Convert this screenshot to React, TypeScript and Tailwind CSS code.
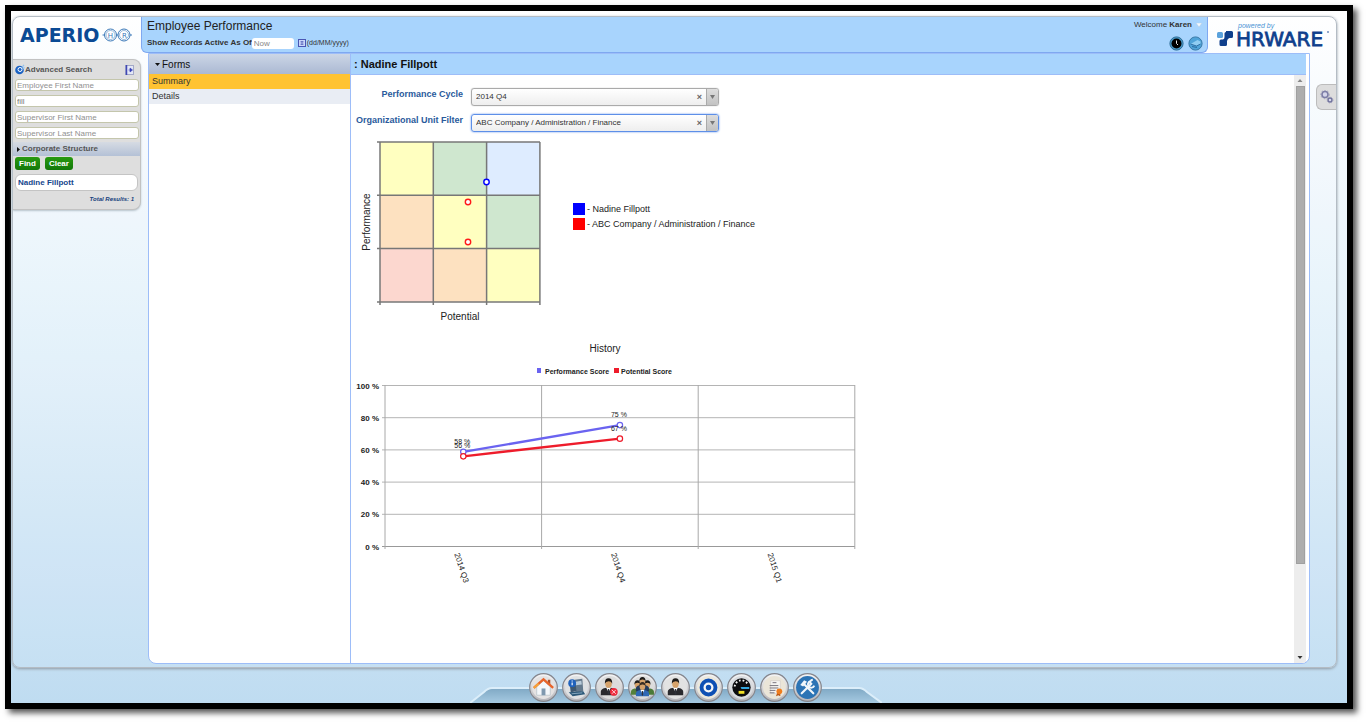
import { useState } from "react";
import type { ReactNode } from "react";

const searchFields = [
    { id: "empFirst", label: "Employee First Name", value: "" },
    { id: "empLast", label: "Employee Last Name", value: "fill" },
    { id: "supFirst", label: "Supervisor First Name", value: "" },
    { id: "supLast", label: "Supervisor Last Name", value: "" },
];

// Nine box cells, top row first
const boxColors = [
    ["#ffffc0", "#cfe7cf", "#deecff"],
    ["#fde1c0", "#ffffc0", "#cfe7cf"],
    ["#fcd7cf", "#fde1c0", "#ffffc0"],
];

const boxPoints = [
    { x: 129.5, y: 44, color: "#0000ff" },
    { x: 111, y: 64, color: "#ff1a1a" },
    { x: 111, y: 104, color: "#ff1a1a" },
];

const cycles = ["2014 Q3", "2014 Q4", "2015 Q1"];

const series = [
    { name: "Performance Score", color: "#6a63f0", values: [58.8, 75.4], labels: ["58 %", "75 %"] },
    { name: "Potential Score", color: "#ee1c2b", values: [56, 67], labels: ["56 %", "67 %"] },
];

function AperioLogo() {
    return (
        <svg width="116" height="20" viewBox="0 0 116 20" role="img" aria-label="Aperio HR">
            <text x="0" y="17" fontSize="19" fontWeight="700" fill="#0b4a94" fontFamily="DejaVu Sans, sans-serif">
                APERIO
            </text>
            <g fill="#ffffff" stroke="#3a78b8" strokeWidth="1">
                <path d="M96 10h3" />
                <circle cx="90.500" cy="10" r="6" />
                <circle cx="104" cy="10" r="6" />
                <circle cx="90.500" cy="10" r="4.500" strokeWidth=".5" />
                <circle cx="104" cy="10" r="4.500" strokeWidth=".5" />
                <path d="M82.500 10h2M110 10h2" />
            </g>
            <g fontSize="7" fill="#3a78b8" textAnchor="middle" fontFamily="DejaVu Sans, sans-serif">
                <text x="90.500" y="12.500">H</text>
                <text x="104.500" y="12.500">R</text>
            </g>
        </svg>
    );
}

function HrwareLogo() {
    return (
        <svg width="114" height="32" viewBox="0 0 114 32" role="img" aria-label="Powered by HRware">
            <text x="22" y="7" fontSize="7" fontStyle="italic" fill="#4a94d4" fontFamily="Liberation Sans, Arial, sans-serif">
                powered by
            </text>
            <rect x="1" y="11" width="6" height="6" rx="1.500" fill="#5aa2dc" />
            <path
                d="M10 10h5.500q1.500 0 1.500 1.500v4q0 1.500-1.500 1.500h-2q-2 .5-2.500 3v3.500q0 1.500-1.500 1.500H5q-1.500 0-1.500-1.500v-3.500q0-1.500 1.500-1.500h2q1.500-.5 1.500-2.500v-3.500q0-1.500 1.500-1.500z"
                fill="#0f3f8c"
            />
            <text
                x="20"
                y="25"
                fontSize="20"
                fill="#0f3f8c"
                stroke="#0f3f8c"
                strokeWidth="0.8"
                fontFamily="DejaVu Sans, sans-serif"
            >
                HRWARE
            </text>
            <circle cx="112" cy="11" r=".8" fill="#0f3f8c" />
        </svg>
    );
}

function Person({ x = 15, y = 7, suit = "#2a2a2e", hair = "#1d1a18" }) {
    return (
        <g transform={`translate(${x} ${y})`}>
            <path d="M-8 16v-3.500q0-3 4.500-4L0 8l3.500.5q4.500 1 4.500 4V16z" fill={suit} />
            <path d="M-2.500 8L0 13l2.500-5z" fill="#ffffff" />
            <path d="M-.6 9.500h1.200L.9 14 0 15.500-.9 14z" fill="#30323a" />
            <ellipse cx="0" cy="4" rx="3.400" ry="4.300" fill="#d6a26a" />
            <path d="M-3.800 4Q-4-1.500 0-1.500T3.800 4Q3 1.400 0 1.500T-3.800 4z" fill={hair} />
        </g>
    );
}

const dockItems: { label: string; face: string; art: ReactNode }[] = [
    {
        label: "Home",
        face: "#e4e2e2",
        art: (
            <>
                <path d="M8 14l7-6 7 6v9H8z" fill="#f4f7fa" stroke="#a9b4bf" strokeWidth=".6" />
                <rect x="19.500" y="7" width="2.500" height="5" fill="#a8512c" />
                <path d="M5 15.500L15 6.500l10 9" fill="none" stroke="#e8642a" strokeWidth="2.400" />
                <path d="M5 15.500l5-4.500" stroke="#f6a33a" strokeWidth="2.200" />
                <rect x="13" y="16" width="4" height="7" fill="#7f98ae" />
            </>
        ),
    },
    {
        label: "System information",
        face: "#dfe1e3",
        art: (
            <>
                <path d="M13 7l8-1 1 13-8 2z" fill="#64798c" />
                <path d="M14 9l6-1 .5 4-6 .8z" fill="#b9cbd9" />
                <path d="M8 12l6-1 1 8-6 1z" fill="#3e5870" />
                <path d="M7 20l15-1 2 3-13 2z" fill="#2c5878" />
                <path d="M10 21.500l11-1" stroke="#9dbbd0" strokeWidth=".8" />
                <circle cx="10.500" cy="10.500" r="4" fill="#1f62bd" />
                <path d="M10.500 9.800v3M10.500 7.800v1" stroke="#fff" strokeWidth="1.200" />
            </>
        ),
    },
    {
        label: "Terminations",
        face: "#dcdcdc",
        art: (
            <>
                <Person x={14} />
                <circle cx="19.500" cy="19.500" r="4" fill="#ef2b3d" />
                <path d="M17.500 17.500l4 4M17.500 21.500l4-4" stroke="#ffd0d4" strokeWidth="1" />
            </>
        ),
    },
    {
        label: "Teams",
        face: "#dcdcdc",
        art: (
            <g transform="translate(2.200 2) scale(.85)">
                <Person x={9} y={8} suit="#55813b" />
                <Person x={21} y={8} suit="#4a7a37" />
                <Person x={15} y={4} suit="#243a5c" />
                <Person x={15} y={10} suit="#2f68b5" hair="#3a2d22" />
            </g>
        ),
    },
    { label: "Employee", face: "#e2e2e2", art: <Person /> },
    {
        label: "Goals",
        face: "#ece8dc",
        art: (
            <>
                <circle cx="15" cy="15" r="7.200" fill="#f7f7f7" stroke="#0f50b4" strokeWidth="4" />
                <circle cx="15" cy="15" r="2.800" fill="#0f50b4" />
            </>
        ),
    },
    {
        label: "Dashboard",
        face: "#d9dce0",
        art: (
            <>
                <circle cx="15" cy="15" r="9.500" fill="#0c0c0e" />
                <path d="M8 14a7 7 0 0 1 13.500-2" fill="none" stroke="#f2f2f2" strokeWidth="2" strokeDasharray="1.800 2" />
                <path d="M14 14.500h9v2h-8z" fill="#35a5dc" />
                <rect x="12" y="18.500" width="6" height="3" fill="#f2e025" />
            </>
        ),
    },
    {
        label: "Certificates",
        face: "#eae5d8",
        art: (
            <>
                <path d="M11 8h10v13H11z" fill="#f6f4f2" stroke="#c6c0c0" strokeWidth=".5" />
                <path d="M13 10h4M10 13h9M10 15.500h9M10 18h6M10 20.500h5" stroke="#77727c" strokeWidth="1" />
                <path d="M18 20l-1.500 4 2.500-1 2 1v-4z" fill="#bb5716" />
                <circle cx="20" cy="19" r="3" fill="#ef7d1d" />
            </>
        ),
    },
    {
        label: "Tools",
        face: "#2c74b5",
        art: (
            <>
                <path d="M9 21l10-10M21 21L11 11" stroke="#f2f7fb" strokeWidth="2.200" strokeLinecap="round" />
                <path d="M7.500 12.500l4-5 3 1.500-4 5z" fill="#f2f7fb" />
                <path d="M18 8.500a3.400 3.400 0 1 0 4 4.500" fill="none" stroke="#f2f7fb" strokeWidth="2" />
                <path d="M18 11.500q-1-4 2.500-4.500" fill="none" stroke="#f2f7fb" strokeWidth="2" />
            </>
        ),
    },
];

function Dock() {
    return (
        <nav aria-label="Modules" className="relative mr-1.5 flex h-full w-[412px] justify-center gap-1 pt-[5px] pr-[2px]">
            <svg className="absolute bottom-0 left-0" width="412" height="16" viewBox="0 0 412 16" aria-hidden="true">
                <defs>
                    <linearGradient id="shelf" x1="0" y1="0" x2="0" y2="1">
                        <stop offset="0" stopColor="#7fa8c4" />
                        <stop offset="1" stopColor="#a6cae2" />
                    </linearGradient>
                </defs>
                <path d="M0 16L14 5q4-4 8-4h367q4 0 8 4l15 11z" fill="url(#shelf)" />
                <path d="M0 16L14 5q4-4 8-4h367q4 0 8 4l15 11" fill="none" stroke="#dceefa" strokeWidth="2" />
            </svg>
            {dockItems.map((item, i) => (
                <button key={item.label} type="button" aria-label={item.label} className="relative size-[29px] shrink-0">
                    <svg width="29" height="29" viewBox="0 0 30 30" aria-hidden="true">
                        <defs>
                            <linearGradient id={`rim${i}`} x1="0" y1="0" x2="0" y2="1">
                                <stop offset="0" stopColor="#f6f6f7" />
                                <stop offset="1" stopColor="#b4b4b9" />
                            </linearGradient>
                        </defs>
                        <circle cx="15" cy="15" r="14.300" fill={`url(#rim${i})`} stroke="#85868d" strokeWidth="1.200" />
                        <circle cx="15" cy="15" r="11.800" fill={item.face} />
                        {item.art}
                    </svg>
                </button>
            ))}
        </nav>
    );
}

function NineBox() {
    const stops = [0, 1, 2, 3];
    return (
        <svg
            width="190"
            height="190"
            viewBox="0 0 190 190"
            className="shrink-0"
            fontFamily="Liberation Sans, Arial, sans-serif"
            fontSize="10"
            fill="#222222"
            textAnchor="middle"
        >
            {boxColors.map((row, r) =>
                row.map((color, c) => (
                    <rect key={`${r}-${c}`} x={23 + c * 53.3} y={4 + r * 53.3} width="53.300" height="53.300" fill={color} />
                ))
            )}
            <g stroke="#777777" strokeWidth="1.500">
                {stops.map((n) => (
                    <g key={n}>
                        <line x1={23 + n * 53.3} y1="4" x2={23 + n * 53.3} y2="167" />
                        <line x1="20" y1={4 + n * 53.3} x2="183" y2={4 + n * 53.3} />
                    </g>
                ))}
            </g>
            {boxPoints.map((p) => (
                <circle key={`${p.x}-${p.y}`} cx={p.x} cy={p.y} r="2.700" fill="#ffffff" stroke={p.color} strokeWidth="1.400" />
            ))}
            <text transform="translate(13 84) rotate(-90)">Performance</text>
            <text x="103" y="182">
                Potential
            </text>
        </svg>
    );
}

function HistoryChart() {
    const px = (i: number) => 34 + 156.6 * (i + 0.5);
    const py = (v: number) => 208.5 - 1.61 * v;

    return (
        <svg
            width="510"
            height="250"
            viewBox="0 0 510 250"
            className="mt-2.5"
            fontFamily="Liberation Sans, Arial, sans-serif"
            fill="#222222"
        >
            <text x="254" y="14" fontSize="10" textAnchor="middle">
                History
            </text>
            <g fontSize="7" fontWeight="700">
                <rect x="186" y="30" width="4" height="5" fill="#6a63f0" />
                <text x="194" y="36">
                    Performance Score
                </text>
                <rect x="263" y="30" width="5" height="5" fill="#ee1c2b" />
                <text x="270" y="36">
                    Potential Score
                </text>
            </g>

            {[0, 20, 40, 60, 80, 100].map((v) => (
                <g key={v}>
                    <line x1="31" y1={py(v)} x2="504" y2={py(v)} stroke={v === 0 ? "#999999" : "#b4b4b4"} />
                    <text x="28" y={py(v) + 3} fontSize="8" fontWeight="700" textAnchor="end">
                        {v} %
                    </text>
                </g>
            ))}
            {[0, 1, 2, 3].map((n) => (
                <line key={n} x1={34 + n * 156.6} y1="47" x2={34 + n * 156.6} y2="211" stroke="#a8a8a8" />
            ))}

            {series.map((s) => (
                <g key={s.name}>
                    <polyline
                        points={s.values.map((v, i) => `${px(i)},${py(v)}`).join(" ")}
                        fill="none"
                        stroke={s.color}
                        strokeWidth="2.400"
                    />
                    {s.values.map((v, i) => (
                        <text key={i} x={px(i) - 1} y={py(v) - 8} fontSize="7" textAnchor="middle">
                            {s.labels[i]}
                        </text>
                    ))}
                    {s.values.map((v, i) => (
                        <circle key={i} cx={px(i)} cy={py(v)} r="2.700" fill="#ffffff" stroke={s.color} strokeWidth="1.200" />
                    ))}
                </g>
            ))}

            {cycles.map((c, i) => (
                <text key={c} transform={`translate(${px(i) - 9} 216) rotate(72)`} fontSize="8">
                    {c}
                </text>
            ))}
        </svg>
    );
}

function FilterSelect({ id, label, options, active }: { id: string; label: string; options: string[]; active?: boolean }) {
    return (
        <>
            <label htmlFor={id} className="text-right text-[9px] leading-3 font-bold text-[#2a5a9c]">
                {label}
            </label>
            <div
                className={`relative flex h-[18px] overflow-hidden rounded-[3px] border bg-linear-to-b from-white to-[#eeeeee] ${
                    active ? "border-[#5d8fe8] shadow-[0_0_2px_#5d8fe8]" : "border-[#aaaaaa] shadow-[0_0_1px_#999999]"
                }`}
            >
                <select id={id} className="w-full appearance-none bg-transparent pl-1 text-[8px] leading-4 text-[#333333] outline-none">
                    {options.map((o) => (
                        <option key={o}>{o}</option>
                    ))}
                </select>
                <button
                    type="button"
                    aria-label={`Clear ${label}`}
                    className="absolute top-0 right-4 text-[9px] leading-[17px] font-bold text-[#666666]"
                >
                    ×
                </button>
                <span className="pointer-events-none flex w-3 shrink-0 items-center justify-center border-l border-[#aaaaaa] bg-linear-to-b from-[#dddddd] to-[#c2c2c2]">
                    <svg width="5" height="4" viewBox="0 0 5 4" aria-hidden="true">
                        <path d="M0 0h5L2.500 4z" fill="#777777" />
                    </svg>
                </span>
            </div>
        </>
    );
}

function Sidebar() {
    const [values, setValues] = useState(searchFields.map((f) => f.value));

    return (
        <aside className="w-32 shrink-0 pt-1.5">
            <form
                onSubmit={(e) => e.preventDefault()}
                className="rounded-lg rounded-l-none border border-l-0 border-[#c2c2c2] bg-[#dedede] pb-1.5 shadow-[0_1px_2px_#b8c4cc]"
            >
                <div className="flex h-[19px] items-center pr-1.5 pl-0.5">
                    <svg width="10" height="11" viewBox="0 0 10 11" aria-hidden="true">
                        <circle cx="4.500" cy="6" r="4.300" fill="#1b62c4" />
                        <circle cx="5" cy="5.500" r="2" fill="none" stroke="#ffffff" />
                        <path d="M6.500 4L9 .8M7.500 5l2-1.500" stroke="#8fc0ee" strokeWidth="1.200" />
                    </svg>
                    <h2 className="flex-1 text-[8px] font-bold text-[#555555]">Advanced Search</h2>
                    <button type="button" aria-label="Collapse search">
                        <svg width="9" height="10" viewBox="0 0 9 10" aria-hidden="true">
                            <rect x=".5" y=".5" width="8" height="9" fill="#e4e8f6" stroke="#a3a9c8" />
                            <path d="M1.500 0v10" stroke="#4148b4" strokeWidth="1.500" />
                            <path d="M3.500 5h2M5 3l2.500 2L5 7z" fill="#3540b8" stroke="#3540b8" strokeWidth=".6" />
                        </svg>
                    </button>
                </div>
                <div className="flex flex-col gap-1 pr-px pl-0.5">
                    {searchFields.map((f, i) => (
                        <input
                            key={f.id}
                            id={f.id}
                            aria-label={f.label}
                            placeholder={f.label}
                            value={values[i]}
                            onChange={(e) => setValues(values.map((v, n) => (n === i ? e.target.value : v)))}
                            className="h-3 w-full rounded-[3px] border border-[#c4c6ac] bg-white px-px text-[8px] leading-[10px] text-[#777777] outline-none placeholder:text-[#909090]"
                        />
                    ))}
                </div>
                <button
                    type="button"
                    className="mt-[3px] flex h-3.5 w-full items-center gap-0.5 bg-linear-to-b from-[#d6dbe3] to-[#b4c1d6] pl-1 text-[8px] font-bold text-[#555555]"
                >
                    <svg width="3" height="5" viewBox="0 0 3 5" aria-hidden="true">
                        <path d="M0 0l3 2.500L0 5z" fill="#111111" />
                    </svg>
                    Corporate Structure
                </button>
                <div className="mt-px flex gap-[5px] pl-0.5">
                    <button
                        type="submit"
                        className="h-[13px] rounded-[3px] bg-linear-to-b from-[#289a10] to-[#12780a] px-1 text-[8px] leading-[13px] font-bold text-white"
                    >
                        Find
                    </button>
                    <button
                        type="reset"
                        className="h-[13px] rounded-[3px] bg-linear-to-b from-[#289a10] to-[#12780a] px-1 text-[8px] leading-[13px] font-bold text-white"
                    >
                        Clear
                    </button>
                </div>
                <a
                    href="#nadine"
                    className="mt-1 mr-0.5 ml-0.5 block h-[17px] rounded-md border border-[#c4c4c4] bg-white px-0.5 text-[8px] leading-[15px] font-bold text-[#15468c]"
                >
                    Nadine Fillpott
                </a>
                <p className="mt-1 pr-1.5 text-right text-[6px] leading-2 font-bold text-[#15407c] italic">Total Results: 1</p>
            </form>
        </aside>
    );
}

function Header() {
    return (
        <header className="flex h-9 shrink-0">
            <div className="flex w-32 shrink-0 items-center rounded-tl-md pl-[7px]">
                <AperioLogo />
            </div>
            <div className="flex min-w-0 flex-1 justify-between rounded-b-md border border-t-0 border-[#7fa8f0] bg-[#a8d4fd] pr-1 pl-[5px]">
                <div>
                    <h1 className="text-[12px] leading-[18px] text-[#222222]">Employee Performance</h1>
                    <div className="flex h-4 items-center">
                        <label htmlFor="activeAsOf" className="text-[8px] font-bold text-[#333333]">
                            Show Records Active As Of
                        </label>
                        <input
                            id="activeAsOf"
                            defaultValue="Now"
                            className="h-[11px] w-[42px] rounded-[3px] bg-white pl-0.5 text-[8px] leading-[11px] text-[#888888] outline-none"
                        />
                        <button type="button" aria-label="Pick date" className="ml-1">
                            <svg width="8" height="8" viewBox="0 0 8 8" aria-hidden="true">
                                <rect x=".5" y=".5" width="7" height="7" fill="#c9d6fa" stroke="#4a56b4" />
                                <path d="M2.500 2.500h3M2.500 4h3M2.500 5.500h3M4 2v4" stroke="#4a56b4" strokeWidth=".6" />
                            </svg>
                        </button>
                        <span className="pl-px text-[7px] text-[#333333]">(dd/MM/yyyy)</span>
                    </div>
                </div>
                <div className="flex flex-col items-end">
                    <button type="button" className="flex h-4 items-center pr-px text-[8px] text-[#333333]">
                        Welcome&nbsp;<b>Karen</b>
                        <svg width="6" height="4" viewBox="0 0 6 4" className="ml-1" aria-hidden="true">
                            <path d="M0 0h6L3 4z" fill="#f4faff" stroke="#b6cbe0" strokeWidth=".5" />
                        </svg>
                    </button>
                    <div className="flex gap-1 pt-[3px]">
                        <button type="button" aria-label="Time clock">
                            <svg width="15" height="15" viewBox="0 0 15 15" aria-hidden="true">
                                <circle cx="7.500" cy="7.500" r="6.600" fill="#4c9ccb" stroke="#2e6d96" />
                                <circle cx="7.500" cy="7.500" r="5" fill="#000000" />
                                <path d="M7.500 4.500v3l1.500 1.500" fill="none" stroke="#e8e8e8" />
                            </svg>
                        </button>
                        <button type="button" aria-label="Training">
                            <svg width="15" height="15" viewBox="0 0 15 15" aria-hidden="true">
                                <circle cx="7.500" cy="7.500" r="6.600" fill="#4fa3d8" stroke="#3a7ba8" />
                                <path d="M2.500 8l7-4 3 1.500v2.500l-4 2z" fill="#8fcdf2" />
                                <path d="M2.500 8l6 2 4-2M4 10.500l5 1" fill="none" stroke="#1f5f94" strokeWidth=".8" />
                            </svg>
                        </button>
                    </div>
                </div>
            </div>
            <div className="flex w-32 shrink-0 items-end pl-2">
                <HrwareLogo />
            </div>
        </header>
    );
}

export default function App() {
    return (
        <div className="flex h-screen min-h-[600px] bg-white pt-[5px] pr-[13px] pb-3.5 pl-[5px] font-['Liberation_Sans',Arial,sans-serif]">
            <div className="flex min-w-0 flex-1 flex-col border-[6px] border-black bg-linear-to-b from-white via-[#e2f0fa] to-[#bfdcf1] shadow-[4px_4px_6px_#555555]">
                <div className="mt-[5px] mr-2.5 ml-px flex min-h-0 flex-1 flex-col rounded-lg border border-[#b4bcc4] bg-white/5 shadow-[0_1px_3px_#8f9aa3]">
                    <Header />
                    <div className="flex min-h-0 flex-1 pb-[3px]">
                        <Sidebar />
                        <main className="ml-[7px] flex min-w-0 flex-1 overflow-hidden rounded-b-lg border border-[#9dbdf8] bg-white">
                            <nav aria-label="Forms" className="w-[202px] shrink-0 border-r border-[#9dbdf8] text-[9px] text-[#333333]">
                                <h2 className="flex h-5 items-center gap-0.5 bg-linear-to-b from-[#ccd6e6] to-[#abb9d3] pl-1.5 text-[10px] text-[#111111]">
                                    <svg width="5" height="3" viewBox="0 0 5 3" aria-hidden="true">
                                        <path d="M0 0h5L2.500 3z" fill="#111111" />
                                    </svg>
                                    Forms
                                </h2>
                                <a href="#summary" className="block bg-[#ffc332] pl-[3px] leading-[15px]">
                                    Summary
                                </a>
                                <a href="#details" className="block bg-[#e9edf4] pl-[3px] leading-[15px]">
                                    Details
                                </a>
                            </nav>
                            <section className="mr-[3px] flex min-w-0 flex-1 flex-col">
                                <h2 className="h-[21px] shrink-0 border-b border-[#9dbdf8] bg-[#a8d4fd] pl-[3px] text-[11px] leading-5 font-bold text-[#111111]">
                                    : Nadine Fillpott
                                </h2>
                                <div className="flex min-h-0 flex-1">
                                    <div className="min-w-0 flex-1 overflow-hidden">
                                        <div className="grid grid-cols-[112px_248px] gap-x-2 gap-y-2 pt-[13px]">
                                            <FilterSelect id="cycle" label="Performance Cycle" options={["2014 Q4", "2014 Q3", "2015 Q1"]} />
                                            <FilterSelect
                                                id="unit"
                                                label="Organizational Unit Filter"
                                                options={["ABC Company / Administration / Finance"]}
                                                active
                                            />
                                        </div>
                                        <div className="mt-1.5 flex pl-1.5">
                                            <NineBox />
                                            <ul className="mt-[65px] ml-[26px] flex flex-col gap-[3px] text-[9px] leading-3 text-[#222222]">
                                                <li className="flex gap-0.5">
                                                    <span className="size-3 bg-[#0000ff]" />- Nadine Fillpott
                                                </li>
                                                <li className="flex gap-0.5">
                                                    <span className="size-3 bg-[#ff0000]" />- ABC Company / Administration / Finance
                                                </li>
                                            </ul>
                                        </div>
                                        <HistoryChart />
                                    </div>
                                    <div className="flex w-3 shrink-0 flex-col items-center bg-[#ededed]" aria-hidden="true">
                                        <svg width="12" height="11" viewBox="0 0 12 11">
                                            <path d="M3.500 7h5L6 4z" fill="#888888" />
                                        </svg>
                                        <div className="w-[9px] flex-[479] border border-[#a0a0a0] bg-[#adadad]" />
                                        <div className="flex-[88]" />
                                        <svg width="12" height="11" viewBox="0 0 12 11">
                                            <path d="M3.500 4h5L6 7z" fill="#333333" />
                                        </svg>
                                    </div>
                                </div>
                            </section>
                        </main>
                        <div className="flex w-[26px] shrink-0 justify-end pt-[31px]">
                            <button
                                type="button"
                                aria-label="Settings"
                                className="flex h-[26px] w-5 items-center justify-center rounded-l-md border border-r-0 border-[#bcbcbc] bg-[#dddddd]"
                            >
                                <svg width="14" height="14" viewBox="0 0 14 14" aria-hidden="true">
                                    <circle cx="5" cy="4.500" r="3" fill="#d5d6ea" stroke="#7d7ea6" strokeWidth="1.600" />
                                    <circle cx="5" cy="4.500" r="4.200" fill="none" stroke="#9a9bb8" strokeWidth="1" strokeDasharray="1.500 1.600" />
                                    <circle cx="10" cy="10" r="2" fill="#d5d6ea" stroke="#70729c" strokeWidth="1.400" />
                                    <circle cx="10" cy="10" r="3" fill="none" stroke="#9a9bb8" strokeWidth=".8" strokeDasharray="1.200 1.200" />
                                </svg>
                            </button>
                        </div>
                    </div>
                </div>
                <footer className="flex h-[35px] shrink-0 justify-center">
                    <Dock />
                </footer>
            </div>
        </div>
    );
}
